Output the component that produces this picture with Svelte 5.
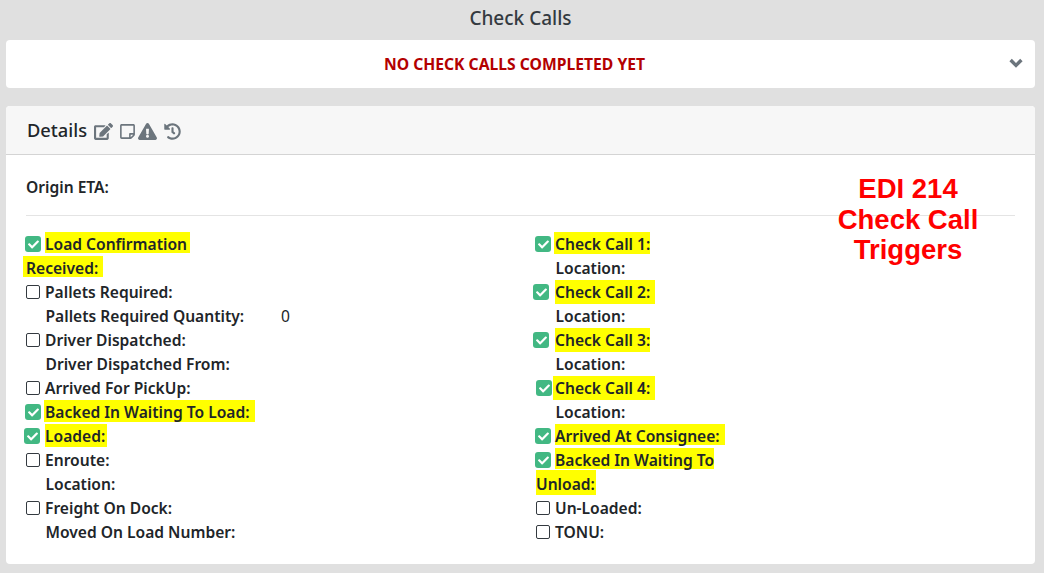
<script>
  const iconPaths = {
    check: 'M173.898 439.404l-166.4-166.4c-9.997-9.997-9.997-26.206 0-36.204l36.203-36.204c9.997-9.998 26.207-9.998 36.204 0L192 312.69 432.095 72.596c9.997-9.997 26.207-9.997 36.204 0l36.203 36.204c9.997 9.997 9.997 26.206 0 36.204l-294.4 294.401c-9.998 9.997-26.207 9.997-36.204-.001z'
  };
  const hl = (l, r, t, b) => `--l:${l}px;--r:${r}px;--t:${t}px;--b:${b}px`;
  const left = [
    { text: 'Load Confirmation', box: 'on', dx: 0, dy: 0, mark: hl(0, 3, 0, 3), },
    { text: 'Received:', bare: true, mark: hl(-3, 5, 0, 3) },
    { text: 'Pallets Required:', box: 'off' },
    { text: 'Pallets Required Quantity:', indent: true, value: '0' },
    { text: 'Driver Dispatched:', box: 'off' },
    { text: 'Driver Dispatched From:', indent: true },
    { text: 'Arrived For PickUp:', box: 'off' },
    { text: 'Backed In Waiting To Load:', box: 'on', mark: hl(-1, 6, 0, 2) },
    { text: 'Loaded:', box: 'on', dx: -1, mark: hl(0, 2, 0, 1) },
    { text: 'Enroute:', box: 'off' },
    { text: 'Location:', indent: true },
    { text: 'Freight On Dock:', box: 'off' },
    { text: 'Moved On Load Number:', indent: true }
  ];
  const right = [
    { text: 'Check Call 1:', box: 'on', mark: hl(-1, 0, 0, 2) },
    { text: 'Location:', indent: true },
    { text: 'Check Call 2:', box: 'on', dx: -2, mark: hl(0, 5, 0, 0) },
    { text: 'Location:', indent: true },
    { text: 'Check Call 3:', box: 'on', dx: -2, mark: hl(0, 0, 0, 0) },
    { text: 'Location:', indent: true },
    { text: 'Check Call 4:', box: 'on', dx: 1, mark: hl(-2, 5, 0, 0) },
    { text: 'Location:', indent: true },
    { text: 'Arrived At Consignee:', box: 'on', mark: hl(0, 5, 0, 3) },
    { text: 'Backed In Waiting To', box: 'on', mark: hl(0, 0, 0, 3) },
    { text: 'Unload:', bare: true, mark: hl(0, 1, -2, 1) },
    { text: 'Un-Loaded:', box: 'off' },
    { text: 'TONU:', box: 'off' }
  ];
  const columns = [left, right];
</script>

<div class="page">
  <h1 class="title">Check Calls</h1>

  <section class="card status">
    <strong class="status-text">NO CHECK CALLS COMPLETED YET</strong>
    <svg class="chevron" viewBox="0 0 14 10" aria-hidden="true"><path d="M1.6 2 7 7.4 12.4 2"/></svg>
  </section>

  <section class="card details">
    <header class="details-head">
      <h2>Details</h2>
      <div class="tools">
        <svg class="i-edit" viewBox="0 0 576 512" aria-hidden="true"><path d="M402.6 83.2l90.2 90.2c3.8 3.8 3.8 10 0 13.8L274.4 405.6l-92.8 10.3c-12.4 1.4-22.9-9.1-21.5-21.5l10.3-92.8L388.8 83.2c3.8-3.8 10-3.8 13.8 0zm162-22.9l-48.8-48.8c-15.2-15.2-39.9-15.2-55.2 0l-35.4 35.4c-3.8 3.8-3.8 10 0 13.8l90.2 90.2c3.8 3.8 10 3.8 13.8 0l35.4-35.4c15.2-15.3 15.2-40 0-55.2zM384 346.2V448H64V128h229.8c3.2 0 6.2-1.3 8.5-3.5l40-40c7.6-7.6 2.2-20.5-8.5-20.5H48C21.5 64 0 85.5 0 112v352c0 26.5 21.5 48 48 48h352c26.5 0 48-21.5 48-48V306.2c0-10.7-12.9-16-20.5-8.5l-40 40c-2.2 2.3-3.5 5.3-3.5 8.5z"/></svg>
        <svg class="i-note" viewBox="0 0 448 512" aria-hidden="true"><path d="M448 348.106V80c0-26.51-21.49-48-48-48H48C21.49 32 0 53.49 0 80v351.988c0 26.51 21.49 48 48 48h268.118a48 48 0 0 0 33.941-14.059l83.882-83.882A48 48 0 0 0 448 348.106zm-128 80v-76.118h76.118L320 428.106zM400 80v223.988H296c-13.255 0-24 10.745-24 24v104H48V80h352z"/></svg>
        <svg class="i-warn" viewBox="0 0 576 512" aria-hidden="true"><path d="M569.517 440.013C587.975 472.007 564.806 512 527.94 512H48.054c-36.937 0-59.999-40.055-41.577-71.987L246.423 23.985c18.467-32.009 64.72-31.951 83.154 0l239.94 416.028zM288 354c-25.405 0-46 20.595-46 46s20.595 46 46 46 46-20.595 46-46-20.595-46-46-46zm-43.673-165.346l7.418 136c.347 6.364 5.609 11.346 11.982 11.346h48.546c6.373 0 11.635-4.982 11.982-11.346l7.418-136c.375-6.874-5.098-12.654-11.982-12.654h-63.383c-6.884 0-12.356 5.78-11.981 12.654z"/></svg>
        <svg class="i-hist" viewBox="0 0 512 512" aria-hidden="true"><path d="M504 255.531c.253 136.64-111.18 248.372-247.82 248.468-59.015.042-113.223-20.53-155.822-54.911-11.077-8.94-11.905-25.541-1.839-35.607l11.267-11.267c8.609-8.609 22.353-9.551 31.891-1.984C173.062 425.135 212.781 440 256 440c101.705 0 184-82.311 184-184 0-101.705-82.311-184-184-184-48.814 0-93.149 18.969-126.068 49.932l50.754 50.754c10.08 10.08 2.941 27.314-11.313 27.314H24c-8.837 0-16-7.163-16-16V38.627c0-14.254 17.234-21.393 27.314-11.314l49.372 49.372C129.209 34.136 189.552 8 256 8c136.81 0 247.747 110.78 248 247.531zm-180.912 78.784l9.823-12.63c8.138-10.463 6.253-25.542-4.21-33.679L288 256.349V152c0-13.255-10.745-24-24-24h-16c-13.255 0-24 10.745-24 24v135.651l65.409 50.874c10.463 8.137 25.541 6.253 33.679-4.21z"/></svg>
      </div>
    </header>

    <div class="details-body">
      <div class="origin">Origin ETA:</div>
      <hr />
      <div class="columns">
        {#each columns as rows}
          <div class="column">
            {#each rows as row}
              <div class="row" class:indent={row.indent}>
                {#if row.box === 'on'}
                  <span class="box on" style="--dx:{row.dx ?? 0}px">
                    <svg viewBox="0 0 512 512" aria-hidden="true"><path d={iconPaths.check}/></svg>
                  </span>
                {:else if row.box === 'off'}
                  <span class="box off"></span>
                {/if}
                {#if row.mark}
                  <span class="mark" style={row.mark}>{row.text}</span>
                {:else}
                  <span>{row.text}</span>
                {/if}
                {#if row.value}<span class="value">{row.value}</span>{/if}
              </div>
            {/each}
          </div>
        {/each}
      </div>
      <div class="note">EDI 214<br />Check Call<br />Triggers</div>
    </div>
  </section>
</div>

<style>
  :global(body) {
    background: #e0e0e0;
    margin: 0;
  }
  .page {
    padding: 0 9px 0 6px;
    font-family: "Noto Sans", "Open Sans", sans-serif;
    color: #212529;
    height: 573px;
    box-sizing: border-box;
    overflow: hidden;
  }
  .title {
    margin: 0;
    height: 40px;
    line-height: 37px;
    text-align: center;
    font-size: 19px;
    font-weight: 500;
    color: #343a40;
  }
  .card {
    background: #fff;
    border-radius: 4px;
  }
  .status {
    height: 48px;
    display: flex;
    align-items: center;
    margin-bottom: 18px;
    padding-right: 12px;
  }
  .status-text {
    flex: 1;
    text-align: center;
    color: #b30000;
    font-size: 15.7px;
    font-weight: 700;
    margin: -1px 0 0 14px;
  }
  .chevron {
    width: 14px;
    height: 10px;
    fill: none;
    stroke: #6c757d;
    stroke-width: 3.4;
    margin-top: -2px;
  }
  .details {
    height: 458px;
    overflow: hidden;
  }
  .details-head {
    height: 48px;
    background: #f7f7f7;
    border-bottom: 1px solid #d4d4d4;
    display: flex;
    align-items: center;
    padding-left: 21px;
  }
  .details-head h2 {
    margin: 1px 0 0;
    font-size: 18.3px;
    font-weight: 500;
    line-height: 1;
  }
  .tools {
    display: flex;
    align-items: center;
    margin-left: 7px;
    margin-top: 3px;
  }
  .tools svg {
    height: 17px;
    fill: #6c757d;
  }
  .i-edit { width: 19px; }
  .i-note { width: 15px; margin-left: 7px; }
  .i-warn { width: 19px; margin-left: 3px; }
  .i-hist { width: 17px; margin-left: 7px; }
  .details-body {
    position: relative;
    padding: 20px 20px 0;
    font-size: 15.6px;
    font-weight: 600;
  }
  .origin {
    line-height: 24px;
  }
  hr {
    border: 0;
    border-top: 1px solid #e4e4e4;
    margin: 16px 0 16px;
  }
  .columns {
    display: grid;
    grid-template-columns: 510px 1fr;
  }
  .row {
    height: 24px;
    line-height: 24px;
    display: flex;
    align-items: center;
    white-space: nowrap;
  }
  .indent {
    padding-left: 19.5px;
  }
  .box {
    box-sizing: border-box;
    flex: none;
    margin-right: 5px;
    border-radius: 2px;
  }
  .box.off {
    width: 14px;
    height: 14px;
    border: 1.5px solid #343a40;
    background: #fff;
  }
  .box.on {
    width: 16px;
    height: 16px;
    margin-left: -1px;
    margin-right: 4px;
    background: #42b883;
    border-radius: 3px;
    display: flex;
    align-items: center;
    justify-content: center;
    transform: translateX(var(--dx));
  }
  .box.on svg {
    width: 11px;
    height: 11px;
    fill: #fff;
  }
  .mark {
    position: relative;
    z-index: 0;
  }
  .mark::before {
    content: "";
    position: absolute;
    z-index: -1;
    left: var(--l);
    right: calc(var(--r) * -1);
    top: var(--t);
    bottom: var(--b);
    background: #ffff00;
  }
  .value {
    position: absolute;
    left: 275px;
    font-weight: 400;
  }
  .note {
    position: absolute;
    top: 19px;
    right: 56px;
    width: 142px;
    text-align: center;
    font-family: "Liberation Sans", Arial, sans-serif;
    font-weight: 700;
    font-size: 27.5px;
    line-height: 30.5px;
    color: #ff0000;
  }
</style>
